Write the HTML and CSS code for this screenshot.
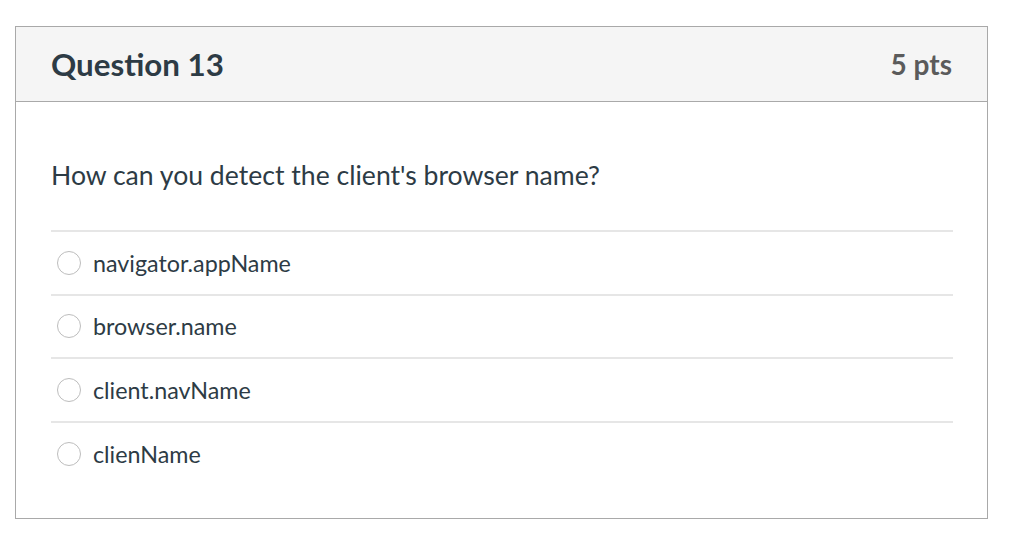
FILE: index.html
```html
<!DOCTYPE html>
<html lang="en">
<head>
<meta charset="utf-8">
<title>Question 13</title>
<link rel="stylesheet" href="styles.css">
</head>
<body>
<div class="card">
  <div class="header">
    <h2 class="title">Question 13</h2>
    <span class="points">5 pts</span>
  </div>
  <div class="content">
    <p class="question">How can you detect the client's browser name?</p>
    <ul class="answers">
      <li class="answer"><span class="radio"></span><span class="label">navigator.appName</span></li>
      <li class="answer"><span class="radio"></span><span class="label">browser.name</span></li>
      <li class="answer"><span class="radio"></span><span class="label">client.navName</span></li>
      <li class="answer"><span class="radio"></span><span class="label">clienName</span></li>
    </ul>
  </div>
</div>
</body>
</html>
```
FILE: styles.css
```css
html, body {
  margin: 0;
  padding: 0;
  background: #ffffff;
}
body {
  font-family: Lato, "Open Sans", sans-serif;
  color: #2d3b45;
  padding: 26px 0 0 15px;
}
.card {
  width: 971px;
  height: 491px;
  border: 1px solid #a9a9a9;
  box-sizing: content-box;
}
.header {
  height: 74px;
  background: #f5f5f5;
  border-bottom: 1px solid #a9a9a9;
  display: flex;
  align-items: center;
  justify-content: space-between;
  padding: 0 35px;
}
.title {
  margin: 0;
  font-size: 31.3px;
  font-weight: 700;
  color: #2d3b45;
}
.points {
  font-size: 28px;
  font-weight: 700;
  color: #5b5b5b;
}
.content {
  padding: 0 34px 0 35px;
}
.question {
  margin: 0;
  padding: 54px 0 36px;
  font-size: 26.6px;
  line-height: 38px;
}
.answers {
  list-style: none;
  margin: 0;
  padding: 0;
}
.answer {
  display: flex;
  align-items: center;
  height: 63.6px;
  border-top: 2px solid #e6e6e6;
  box-sizing: border-box;
  padding-left: 6px;
}
.radio {
  width: 22px;
  height: 22px;
  border: 1px solid #bdbdbd;
  border-radius: 50%;
  background: #fff;
  flex: none;
  margin-right: 12px;
}
.label {
  font-size: 23.3px;
}
```
